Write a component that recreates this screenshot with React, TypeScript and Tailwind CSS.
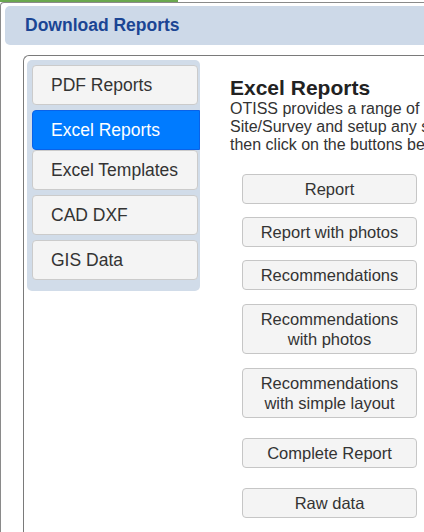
const TABS = ["PDF Reports", "Excel Reports", "Excel Templates", "CAD DXF", "GIS Data"];

const BUTTONS: { label: string[]; gap: string }[] = [
  { label: ["Report"], gap: "mt-0" },
  { label: ["Report with photos"], gap: "mt-[13px]" },
  { label: ["Recommendations"], gap: "mt-[13px]" },
  { label: ["Recommendations", "with photos"], gap: "mt-[14px]" },
  { label: ["Recommendations", "with simple layout"], gap: "mt-[14px]" },
  { label: ["Complete Report"], gap: "mt-[20px]" },
  { label: ["Raw data"], gap: "mt-[20px]" },
];

export default function App() {
  const active = "Excel Reports";

  return (
    <div
      className="w-[424px] h-[532px] overflow-hidden bg-white text-[#333]"
      style={{ fontFamily: '"Liberation Sans", Arial, sans-serif' }}
    >
      <div className="h-[2px] w-[178px] bg-[#6aa84f]" />
      <div className="w-[700px] h-[600px] border-l border-t border-[#8a8a8a] rounded-tl-[4px] pl-[4px] pt-[3px]">
        <div className="h-[39px] rounded-[5px] bg-[#cdd9e8] pl-[20px] flex items-center">
          <h1 className="text-[17.5px] font-bold text-[#1b4594] leading-none">Download Reports</h1>
        </div>

        <div className="mt-[10px] ml-[18px] h-[600px] border-l border-t border-[#7a7a7a] rounded-tl-[6px] pl-[3px] pt-[4px] flex">
          <div className="w-[173px] self-start bg-[#d1dce9] rounded-[5px] pl-[5px] pr-[2px] pt-[5px] pb-[6px]">
            {TABS.map((tab) => {
              const on = tab === active;
              return (
                <div
                  key={tab}
                  className={
                    on
                      ? "mb-0 -mr-[2px] h-[40px] rounded-l-[4px] border border-[#0a62e8] bg-[#007bff] text-white pl-[18px] text-[17.5px] leading-[20px] py-[9px]"
                      : "mb-[5px] h-[40px] rounded-[4px] border border-[#cbcbcb] bg-[#f4f4f4] text-[#333] pl-[18px] text-[17.5px] leading-[20px] py-[9px]"
                  }
                >
                  {tab}
                </div>
              );
            })}
          </div>

          <div className="ml-[30px] pt-[16px]">
            <h2 className="text-[21px] font-bold leading-[24px] text-[#222]">Excel Reports</h2>
            <p className="text-[16px] leading-[18px] text-[#333] whitespace-nowrap">
              OTISS provides a range of predefined reports. Select the
              <br />
              Site/Survey and setup any selection criteria required,
              <br />
              then click on the buttons below to download.
            </p>

            <div className="mt-[20px] ml-[12px] w-[175px] flex flex-col">
              {BUTTONS.map((b) => (
                <button
                  key={b.label.join(" ")}
                  className={`${b.gap} w-full rounded-[4px] border border-[#c6c6c6] bg-[#f4f4f4] text-[#333] text-[16.5px] leading-[20px] py-[4px] text-center`}
                >
                  {b.label.map((l) => (
                    <div key={l}>{l}</div>
                  ))}
                </button>
              ))}
            </div>
          </div>
        </div>
      </div>
    </div>
  );
}
